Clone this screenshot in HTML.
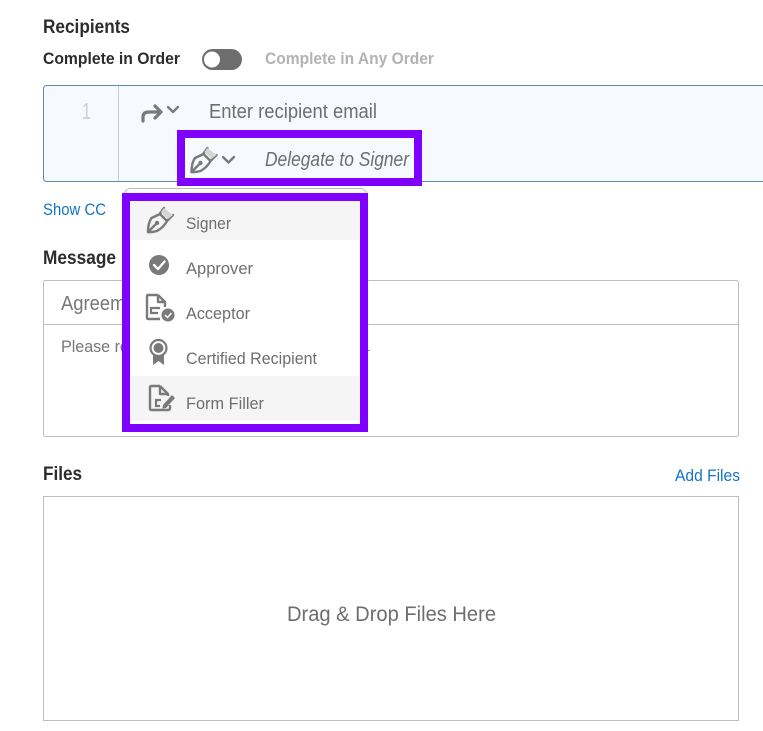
<!DOCTYPE html>
<html>
<head>
<meta charset="utf-8">
<style>
html,body{margin:0;padding:0;background:#fff;width:763px;height:731px;overflow:hidden}
svg{display:block}
text{font-family:"Liberation Sans",sans-serif}
</style>
</head>
<body>
<svg width="763" height="731" viewBox="0 0 763 731" xmlns="http://www.w3.org/2000/svg">
<defs>
<g id="pen" fill="none" stroke="#7a7a7a" stroke-width="2.400" stroke-linejoin="round" stroke-linecap="round">
<path d="M1 25 Q1 16 4.500 11 L13 7 L20 14 Q17 20 10 24 Q5 25.500 1 25 Z"/>
<path d="M1 25 L8 18"/>
<circle cx="10" cy="16" r="2.200" fill="#7a7a7a" stroke="none"/>
<path d="M13 6.500 L17 1 M20 14 L26 8"/>
<path d="M17 1 L26 8 L21 12 L14 5 Z" fill="#d6d6d6" stroke="none"/>
</g>
</defs>
<rect width="763" height="731" fill="#fff"/>

<text x="43" y="33" font-size="19" font-weight="700" fill="#2c2c2c" textLength="87" lengthAdjust="spacingAndGlyphs">Recipients</text>
<text x="43" y="64" font-size="17" font-weight="700" fill="#2c2c2c" textLength="137" lengthAdjust="spacingAndGlyphs">Complete in Order</text>
<rect x="202" y="49" width="40" height="21" rx="10.500" fill="#6e6e6e"/>
<circle cx="212" cy="59.500" r="8" fill="#fff"/>
<text x="265" y="64" font-size="17" font-weight="700" fill="#b3b3b3" textLength="169" lengthAdjust="spacingAndGlyphs">Complete in Any Order</text>

<rect x="43.500" y="85.500" width="740" height="96" rx="3" fill="#f6f9fd" stroke="#5b8ab5"/>
<rect x="118" y="86" width="1" height="95" fill="#cccccc"/>
<text x="82" y="119" font-size="23" fill="#d0d0d0" textLength="9" lengthAdjust="spacingAndGlyphs">1</text>
<path d="M143 121 V117 Q143 112 149 112 H160 M155 106 L161 112 L155 118" fill="none" stroke="#7a7a7a" stroke-width="3.200" stroke-linecap="round" stroke-linejoin="round"/>
<path d="M168 107 L173 112 L178 107" fill="none" stroke="#7a7a7a" stroke-width="2.400" stroke-linecap="round" stroke-linejoin="round"/>
<text x="209" y="118" font-size="20" fill="#6e6e6e" textLength="168" lengthAdjust="spacingAndGlyphs">Enter recipient email</text>

<rect x="124.500" y="188.500" width="242" height="30" rx="6" fill="#fff" stroke="#bbbbbb"/>
<text x="43" y="215" font-size="17" fill="#1473c8" textLength="63" lengthAdjust="spacingAndGlyphs">Show CC</text>

<text x="43" y="264" font-size="19" font-weight="700" fill="#2c2c2c" textLength="73" lengthAdjust="spacingAndGlyphs">Message</text>
<rect x="43.500" y="280.500" width="695" height="156" rx="2" fill="#fff" stroke="#bdbdbd"/>
<rect x="44" y="324" width="694" height="1" fill="#bdbdbd"/>
<text x="61" y="310" font-size="20" fill="#777777" textLength="90" lengthAdjust="spacingAndGlyphs">Agreement</text>
<text x="61" y="352" font-size="17" fill="#777777" textLength="100" lengthAdjust="spacingAndGlyphs">Please review</text>
<rect x="368" y="350" width="2" height="1" fill="#7f9ab8"/>

<text x="43" y="480" font-size="19" font-weight="700" fill="#2c2c2c" textLength="39" lengthAdjust="spacingAndGlyphs">Files</text>
<text x="675" y="481" font-size="17" fill="#1473c8" textLength="65" lengthAdjust="spacingAndGlyphs">Add Files</text>
<rect x="43.500" y="496.500" width="695" height="224" fill="#fff" stroke="#bdbdbd"/>
<text x="287" y="621" font-size="21" fill="#6e6e6e" textLength="209" lengthAdjust="spacingAndGlyphs">Drag &amp; Drop Files Here</text>

<!-- Delegate highlight box -->
<rect x="181" y="134" width="237" height="48" fill="#f6f9fd" stroke="#8000ff" stroke-width="8"/>
<use href="#pen" x="190.500" y="147"/>
<path d="M223 157 L228.500 162.500 L234 157" fill="none" stroke="#7a7a7a" stroke-width="2.400" stroke-linecap="round" stroke-linejoin="round"/>
<text x="265" y="166" font-size="20" font-style="italic" fill="#6e6e6e" textLength="144" lengthAdjust="spacingAndGlyphs">Delegate to Signer</text>

<!-- Dropdown highlight box -->
<rect x="126" y="197" width="238" height="231" fill="#fff" stroke="#8000ff" stroke-width="8"/>
<rect x="130" y="201" width="230" height="39" fill="#f5f5f5"/>
<rect x="130" y="376" width="230" height="45" fill="#f5f5f5"/>

<use href="#pen" x="147" y="207"/>
<text x="186" y="229" font-size="17" fill="#6e6e6e" textLength="45" lengthAdjust="spacingAndGlyphs">Signer</text>

<circle cx="159" cy="265" r="10" fill="#7a7a7a"/>
<path d="M154 265 L158 269 L164.500 261.500" fill="none" stroke="#fff" stroke-width="2.400" stroke-linecap="round" stroke-linejoin="round"/>
<text x="186" y="274" font-size="17" fill="#6e6e6e" textLength="67" lengthAdjust="spacingAndGlyphs">Approver</text>

<path d="M158 295 H148.500 Q147 295 147 296.500 V317.500 Q147 319 148.500 319 H160 M158 295 L165 302 V307 M158 295 V302 H165" fill="none" stroke="#7a7a7a" stroke-width="2.400" stroke-linejoin="round"/>
<path d="M160 308 H151 V313 H158" fill="none" stroke="#7a7a7a" stroke-width="2.200"/>
<circle cx="168" cy="315" r="6.500" fill="#7a7a7a"/>
<path d="M165 315 L167.500 317.500 L171.500 313" fill="none" stroke="#fff" stroke-width="1.500"/>
<text x="186" y="319" font-size="17" fill="#6e6e6e" textLength="64" lengthAdjust="spacingAndGlyphs">Acceptor</text>

<path d="M153 354 V365 L158.500 361 L164 365 V354 Z" fill="#7a7a7a"/>
<circle cx="158.500" cy="348" r="8" fill="#fff" stroke="#7a7a7a" stroke-width="2.200"/>
<circle cx="158.500" cy="348" r="5" fill="#7a7a7a"/>
<text x="186" y="364" font-size="17" fill="#6e6e6e" textLength="131" lengthAdjust="spacingAndGlyphs">Certified Recipient</text>

<path d="M160 386 H151.500 Q150 386 150 387.500 V408.500 Q150 410 151.500 410 H168 Q170 410 170 408 V405 M160 386 L168 394 V396 M160 386 V394 H168" fill="none" stroke="#7a7a7a" stroke-width="2.400" stroke-linejoin="round"/>
<path d="M161 400 H156 V406 H160" fill="none" stroke="#7a7a7a" stroke-width="2.200"/>
<path d="M163 405 L172 395 L175 398 L166 408 L162.500 408.500 Z" fill="#7a7a7a"/>
<text x="186" y="409" font-size="17" fill="#6e6e6e" textLength="78" lengthAdjust="spacingAndGlyphs">Form Filler</text>
</svg>
</body>
</html>
